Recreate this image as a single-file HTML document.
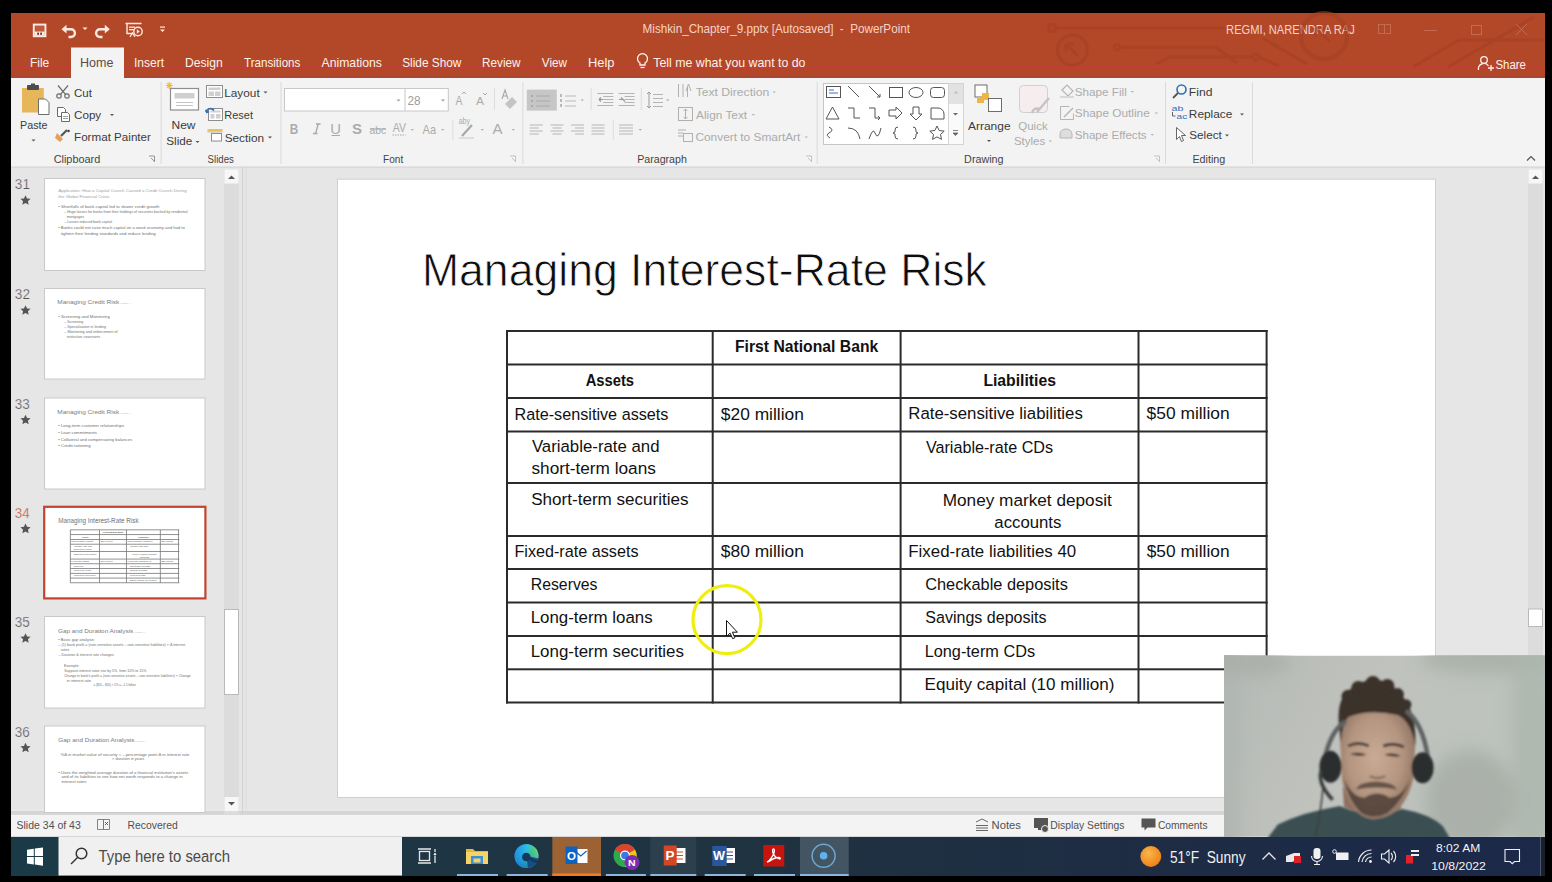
<!DOCTYPE html>
<html><head><meta charset="utf-8"><title>PowerPoint</title>
<style>
html,body{margin:0;padding:0;width:1552px;height:882px;overflow:hidden;background:#000;}
svg{position:absolute;left:0;top:0;display:block;}
#wrap{position:absolute;left:0;top:0;width:1552px;height:882px;}
text{font-family:"Liberation Sans",sans-serif;white-space:pre;}
</style></head><body>
<div id="wrap">
<svg width="1552" height="882" viewBox="0 0 1552 882">
<defs>
<linearGradient id="tbg" x1="0" x2="1" y1="0" y2="0">
 <stop offset="0" stop-color="#1d3a48"/><stop offset="0.5" stop-color="#1f3240"/><stop offset="0.75" stop-color="#1e2c44"/><stop offset="1" stop-color="#1c2849"/>
</linearGradient>
</defs>
<rect x="0" y="0" width="1552" height="882" fill="#000"/>
<rect x="11" y="13" width="1534" height="65" fill="#b34828"/>
<rect x="11" y="66" width="1534" height="3.6" fill="#bc4130"/><rect x="11" y="64.5" width="1534" height="1.5" fill="#ab4b27"/><rect x="11" y="75.5" width="1534" height="2.5" fill="#a84733"/>
<rect x="71" y="47.5" width="53" height="31" fill="#f3f3f3"/>
<rect x="11" y="78" width="1534" height="89" fill="#f3f3f3"/>
<rect x="11" y="167" width="1534" height="648" fill="#e6e6e6"/>
<rect x="11" y="166.5" width="1534" height="1.2" fill="#d4d4d4"/>
<rect x="11" y="809.3" width="1534" height="1" fill="#ececec"/><rect x="11" y="811" width="1534" height="3.8" fill="#d5d5d5"/>
<rect x="11" y="815" width="1534" height="21.5" fill="#f3f3f3"/>
<rect x="11" y="837" width="1534" height="39" fill="url(#tbg)"/><rect x="11" y="836" width="1534" height="1" fill="#d6d6d6"/>
<rect x="337.5" y="179.2" width="1098" height="618.3" fill="#fff" stroke="#d0d0d0" stroke-width="1"/>
<text x="421.93" y="286.20" font-size="46.43" textLength="564.96" lengthAdjust="spacingAndGlyphs" fill="#0d0d0d" stroke="#fff" stroke-width="0.8">Managing Interest-Rate Risk</text>
<rect x="506.0" y="330.0" width="761.6" height="2" fill="#2b2b2b"/>
<rect x="506.0" y="363.5" width="761.6" height="2" fill="#2b2b2b"/>
<rect x="506.0" y="397.0" width="761.6" height="2" fill="#2b2b2b"/>
<rect x="506.0" y="430.5" width="761.6" height="2" fill="#2b2b2b"/>
<rect x="506.0" y="482.0" width="761.6" height="2" fill="#2b2b2b"/>
<rect x="506.0" y="535.0" width="761.6" height="2" fill="#2b2b2b"/>
<rect x="506.0" y="568.0" width="761.6" height="2" fill="#2b2b2b"/>
<rect x="506.0" y="601.5" width="761.6" height="2" fill="#2b2b2b"/>
<rect x="506.0" y="635.0" width="761.6" height="2" fill="#2b2b2b"/>
<rect x="506.0" y="668.3" width="761.6" height="2" fill="#2b2b2b"/>
<rect x="506.0" y="701.5" width="761.6" height="2" fill="#2b2b2b"/>
<rect x="506.0" y="330.0" width="2" height="373.5" fill="#2b2b2b"/>
<rect x="711.7" y="330.0" width="2" height="373.5" fill="#2b2b2b"/>
<rect x="899.6" y="330.0" width="2" height="373.5" fill="#2b2b2b"/>
<rect x="1137.5" y="330.0" width="2" height="373.5" fill="#2b2b2b"/>
<rect x="1265.6" y="330.0" width="2" height="373.5" fill="#2b2b2b"/>
<text x="734.98" y="352.30" font-size="16.86" textLength="143.27" lengthAdjust="spacingAndGlyphs" fill="#111" font-weight="bold">First National Bank</text>
<text x="585.63" y="386.10" font-size="16.86" textLength="48.46" lengthAdjust="spacingAndGlyphs" fill="#111" font-weight="bold">Assets</text>
<text x="983.38" y="385.90" font-size="16.86" textLength="72.59" lengthAdjust="spacingAndGlyphs" fill="#111" font-weight="bold">Liabilities</text>
<text x="514.50" y="419.50" font-size="16.86" textLength="153.95" lengthAdjust="spacingAndGlyphs" fill="#111">Rate-sensitive assets</text>
<text x="720.83" y="419.50" font-size="16.86" textLength="83.01" lengthAdjust="spacingAndGlyphs" fill="#111">$20 million</text>
<text x="908.26" y="419.30" font-size="16.86" textLength="174.60" lengthAdjust="spacingAndGlyphs" fill="#111">Rate-sensitive liabilities</text>
<text x="1146.63" y="419.30" font-size="16.86" textLength="83.01" lengthAdjust="spacingAndGlyphs" fill="#111">$50 million</text>
<text x="531.92" y="452.20" font-size="16.86" textLength="127.62" lengthAdjust="spacingAndGlyphs" fill="#111">Variable-rate and</text>
<text x="531.48" y="474.40" font-size="16.86" textLength="124.42" lengthAdjust="spacingAndGlyphs" fill="#111">short-term loans</text>
<text x="925.92" y="452.90" font-size="16.86" textLength="127.22" lengthAdjust="spacingAndGlyphs" fill="#111">Variable-rate CDs</text>
<text x="531.23" y="505.30" font-size="16.86" textLength="157.36" lengthAdjust="spacingAndGlyphs" fill="#111">Short-term securities</text>
<text x="942.72" y="505.50" font-size="16.86" textLength="169.11" lengthAdjust="spacingAndGlyphs" fill="#111">Money market deposit</text>
<text x="994.33" y="527.80" font-size="16.86" textLength="67.01" lengthAdjust="spacingAndGlyphs" fill="#111">accounts</text>
<text x="514.40" y="556.80" font-size="16.86" textLength="124.16" lengthAdjust="spacingAndGlyphs" fill="#111">Fixed-rate assets</text>
<text x="720.83" y="556.80" font-size="16.86" textLength="83.01" lengthAdjust="spacingAndGlyphs" fill="#111">$80 million</text>
<text x="908.25" y="557.20" font-size="16.86" textLength="167.93" lengthAdjust="spacingAndGlyphs" fill="#111">Fixed-rate liabilities 40</text>
<text x="1146.73" y="557.20" font-size="16.86" textLength="82.81" lengthAdjust="spacingAndGlyphs" fill="#111">$50 million</text>
<text x="530.73" y="590.00" font-size="16.86" textLength="66.80" lengthAdjust="spacingAndGlyphs" fill="#111">Reserves</text>
<text x="925.18" y="590.30" font-size="16.86" textLength="142.65" lengthAdjust="spacingAndGlyphs" fill="#111">Checkable deposits</text>
<text x="530.65" y="623.00" font-size="16.86" textLength="121.96" lengthAdjust="spacingAndGlyphs" fill="#111">Long-term loans</text>
<text x="925.28" y="623.10" font-size="16.86" textLength="121.29" lengthAdjust="spacingAndGlyphs" fill="#111">Savings deposits</text>
<text x="530.65" y="656.50" font-size="16.86" textLength="153.34" lengthAdjust="spacingAndGlyphs" fill="#111">Long-term securities</text>
<text x="924.70" y="656.60" font-size="16.86" textLength="110.37" lengthAdjust="spacingAndGlyphs" fill="#111">Long-term CDs</text>
<text x="924.63" y="690.20" font-size="16.86" textLength="189.81" lengthAdjust="spacingAndGlyphs" fill="#111">Equity capital (10 million)</text>
<circle cx="727" cy="619.7" r="34" fill="none" stroke="#eeee10" stroke-width="3.2"/>
<path d="M726.5 620.5 v16 l3.6 -3.4 2.6 5.6 2.2 -1 -2.5 -5.5 h5z" fill="#fff" stroke="#111" stroke-width="1"/>
<rect x="33.8" y="24.6" width="11.6" height="11.6" fill="none" stroke="#fde9e2" stroke-width="2"/>
<rect x="35.5" y="26" width="8.2" height="5" fill="#c25a40"/><rect x="34.8" y="31.5" width="9.8" height="4" fill="#fde9e2"/><rect x="37.2" y="32.6" width="1.8" height="2.2" fill="#6e3222"/><rect x="40.2" y="32.6" width="1.8" height="2.2" fill="#6e3222"/>
<path d="M65.5 29.2 H71 A3.9 3.9 0 0 1 71 37 H68.5" fill="none" stroke="#fde9e2" stroke-width="2.4"/><path d="M61.5 29.2 L66.5 24.8 V33.6z" fill="#fde9e2"/>
<path d="M82.5 27.5 h5 l-2.5 2.5z" fill="#fde9e2"/>
<path d="M105.5 29.2 H100 A3.9 3.9 0 0 0 100 37 H102.5" fill="none" stroke="#fde9e2" stroke-width="2.4"/><path d="M109.8 29.2 L104.8 24.8 V33.6z" fill="#fde9e2"/>
<g fill="none" stroke="#fde9e2" stroke-width="1.4"><path d="M125.5 23.5 h16 M127 23.5 v10 h6"/><circle cx="138" cy="31.5" r="4.2"/></g><path d="M136.8 29.3 l3 2.2 -3 2.2z" fill="#fde9e2"/><path d="M130 37 l2.5 -4 2.5 4" fill="none" stroke="#fde9e2" stroke-width="1.2"/><rect x="129" y="26.5" width="6" height="1.3" fill="#fde9e2"/><rect x="129" y="29" width="5" height="1.3" fill="#fde9e2"/>
<rect x="160" y="26.5" width="5" height="1.2" fill="#fde9e2"/><path d="M160 29.5 h5 l-2.5 2.5z" fill="#fde9e2"/>
<text x="642.57" y="33.30" font-size="12.43" textLength="267.41" lengthAdjust="spacingAndGlyphs" fill="#f6d3c6">Mishkin_Chapter_9.pptx [Autosaved]  -  PowerPoint</text>
<text x="1226.11" y="34.00" font-size="13.14" textLength="128.75" lengthAdjust="spacingAndGlyphs" fill="#f6d3c6">REGMI, NARENDRA RAJ</text>
<g fill="none" stroke="#a53f24" stroke-width="3" opacity="0.6"><path d="M1055 28 H1225"/><rect x="1049" y="25" width="6" height="6"/><circle cx="1072.5" cy="50" r="15"/><path d="M1066 44 l12 12 M1066 44 h8 M1066 44 v8"/><path d="M1120 47.3 H1216 L1237 63"/><circle cx="1117" cy="47.3" r="3"/><path d="M1156 64 L1170 57 H1253 M1259 57 L1279 66"/><circle cx="1256" cy="57" r="3"/><path d="M1263 38.5 L1307 64"/><circle cx="1324" cy="36" r="23" stroke-width="4"/><path d="M1316 28 l14 14 M1316 28 h9 M1316 28 v9"/><path d="M1413 67 L1459 40 H1545 M1448 67 L1534 17"/></g>
<g fill="none" stroke="#c46a52" stroke-width="1"><rect x="1378.5" y="24.5" width="12" height="9"/><path d="M1384.5 24.5 v9"/><path d="M1424 30.5 h13"/><rect x="1471.5" y="25.5" width="10" height="9"/><path d="M1516 24 l11 11 M1527 24 l-11 11"/></g>
<text x="29.94" y="66.60" font-size="12.29" textLength="19.32" lengthAdjust="spacingAndGlyphs" fill="#fdf1ec">File</text>
<text x="133.91" y="66.60" font-size="12.29" textLength="30.16" lengthAdjust="spacingAndGlyphs" fill="#fdf1ec">Insert</text>
<text x="185.03" y="66.60" font-size="12.29" textLength="37.80" lengthAdjust="spacingAndGlyphs" fill="#fdf1ec">Design</text>
<text x="243.97" y="66.60" font-size="12.29" textLength="56.42" lengthAdjust="spacingAndGlyphs" fill="#fdf1ec">Transitions</text>
<text x="321.50" y="66.60" font-size="12.29" textLength="60.45" lengthAdjust="spacingAndGlyphs" fill="#fdf1ec">Animations</text>
<text x="402.17" y="66.60" font-size="12.29" textLength="59.21" lengthAdjust="spacingAndGlyphs" fill="#fdf1ec">Slide Show</text>
<text x="482.06" y="66.60" font-size="12.29" textLength="38.42" lengthAdjust="spacingAndGlyphs" fill="#fdf1ec">Review</text>
<text x="541.84" y="66.60" font-size="12.29" textLength="25.15" lengthAdjust="spacingAndGlyphs" fill="#fdf1ec">View</text>
<text x="587.97" y="66.60" font-size="12.29" textLength="26.57" lengthAdjust="spacingAndGlyphs" fill="#fdf1ec">Help</text>
<text x="80.00" y="66.60" font-size="12.29" textLength="33.40" lengthAdjust="spacingAndGlyphs" fill="#5e4a44">Home</text>
<g fill="none" stroke="#fdf1ec" stroke-width="1.3"><path d="M640 65 v-2 a5 5 0 1 1 5 0 v2 z"/><path d="M640.5 67.5 h4"/></g>
<text x="653.25" y="66.80" font-size="12.57" textLength="152.24" lengthAdjust="spacingAndGlyphs" fill="#fdf1ec">Tell me what you want to do</text>
<g fill="none" stroke="#fdf1ec" stroke-width="1.3"><circle cx="1484" cy="60" r="3.3"/><path d="M1478.5 70 a5.5 5.5 0 0 1 10 -4"/><path d="M1488 68 h6 M1491 65 v6"/></g>
<text x="1495.49" y="69.00" font-size="12.86" textLength="30.47" lengthAdjust="spacingAndGlyphs" fill="#fdf1ec">Share</text>
<rect x="160.6" y="82" width="1" height="82" fill="#dadada"/>
<rect x="280.5" y="82" width="1" height="82" fill="#dadada"/>
<rect x="522.4" y="82" width="1" height="82" fill="#dadada"/>
<rect x="816.7" y="82" width="1" height="82" fill="#dadada"/>
<rect x="1165.0" y="82" width="1" height="82" fill="#dadada"/>
<rect x="1252.0" y="82" width="1" height="82" fill="#dadada"/>
<rect x="22" y="88" width="21.8" height="24.5" fill="#e8b65a"/><rect x="27" y="85" width="12" height="5" rx="1" fill="#4d4d4d"/><rect x="31" y="83.5" width="4" height="3" fill="#4d4d4d"/>
<path d="M38.5 99 h7 l3.5 3.5 v12 h-10.5z" fill="#fff" stroke="#6d6d6d" stroke-width="1"/>
<text x="20.04" y="129.00" font-size="11.00" textLength="27.47" lengthAdjust="spacingAndGlyphs" fill="#3b3b3b">Paste</text>
<path d="M31.5 139.5 h4 l-2 2z" fill="#555"/>
<g fill="none" stroke="#6b6b6b" stroke-width="1.2"><circle cx="59" cy="96" r="2.2"/><circle cx="67" cy="96" r="2.2"/><path d="M60.5 94.3 L68 85.5 M65.5 94.3 L58 85.5"/></g>
<text x="74.03" y="96.80" font-size="11.71" textLength="17.84" lengthAdjust="spacingAndGlyphs" fill="#3b3b3b">Cut</text>
<g fill="#fff" stroke="#6b6b6b" stroke-width="1"><path d="M57.5 107.5 h6 l2 2 v7 h-8z"/><path d="M61.5 112.5 h6 l2 2 v7 h-8z"/></g><g stroke="#8a8a8a" stroke-width="0.8"><path d="M63 116.5 h5 M63 118.5 h5"/></g>
<text x="74.02" y="118.70" font-size="11.71" textLength="27.18" lengthAdjust="spacingAndGlyphs" fill="#3b3b3b">Copy</text>
<path d="M110 114 h4 l-2 2z" fill="#555"/>
<path d="M57 133 l6 6 -3 3 -5 -4z" fill="#e4a05a"/><path d="M61 136 l6 -6" stroke="#555" stroke-width="2.2"/><circle cx="68.5" cy="131" r="1.3" fill="#444"/>
<text x="74.07" y="141.00" font-size="11.14" textLength="76.84" lengthAdjust="spacingAndGlyphs" fill="#3b3b3b">Format Painter</text>
<text x="53.65" y="162.70" font-size="10.00" textLength="46.66" lengthAdjust="spacingAndGlyphs" fill="#444">Clipboard</text>
<path d="M149 156 h5.5 v5.5 M151 158 l4 4" fill="none" stroke="#8a8a8a" stroke-width="0.9"/>
<rect x="170.5" y="88.5" width="28" height="21.5" fill="#fff" stroke="#8d8d8d" stroke-width="1.2"/><rect x="174.5" y="93" width="20" height="5.5" fill="#cfcfcf"/><path d="M176 102.5 h17 M176 105.5 h17" stroke="#c5c5c5" stroke-width="1"/>
<g stroke="#f2b84b" stroke-width="1.2"><path d="M169.3 82 v7 M165.8 85.5 h7 M167 83.2 l4.6 4.6 M171.6 83.2 l-4.6 4.6"/></g>
<text x="171.54" y="129.10" font-size="11.14" textLength="23.90" lengthAdjust="spacingAndGlyphs" fill="#3b3b3b">New</text>
<text x="166.27" y="144.80" font-size="11.71" textLength="26.04" lengthAdjust="spacingAndGlyphs" fill="#3b3b3b">Slide</text>
<path d="M195.5 141 h4 l-2 2z" fill="#555"/>
<rect x="206.5" y="85.5" width="16" height="12" fill="#fff" stroke="#8d8d8d" stroke-width="1"/><rect x="208.5" y="87.5" width="12" height="2.5" fill="#cfcfcf"/><rect x="208.5" y="91.5" width="5.5" height="4.5" fill="#cfcfcf"/><rect x="215" y="91.5" width="5.5" height="4.5" fill="#cfcfcf"/>
<text x="224.26" y="96.80" font-size="11.71" textLength="35.43" lengthAdjust="spacingAndGlyphs" fill="#3b3b3b">Layout</text>
<path d="M263.5 91.5 h4 l-2 2z" fill="#555"/>
<rect x="208.5" y="108.5" width="14" height="12" fill="#fff" stroke="#8d8d8d" stroke-width="1"/><rect x="210.5" y="110.5" width="10" height="2" fill="#d0d0d0"/><rect x="210.5" y="114" width="4" height="4.5" fill="#d0d0d0"/><rect x="216" y="114" width="4.5" height="4.5" fill="#d0d0d0"/><path d="M206 112 a4.5 4.5 0 0 1 8 -1.5" fill="none" stroke="#2f6fb6" stroke-width="1.6"/><path d="M205 109.5 l1.2 4 3.5-1.5z" fill="#2f6fb6"/>
<text x="224.32" y="118.70" font-size="11.71" textLength="28.66" lengthAdjust="spacingAndGlyphs" fill="#3b3b3b">Reset</text>
<rect x="207.5" y="129" width="15" height="2.5" fill="#e8c25a"/><rect x="211.5" y="133.5" width="10" height="7.5" fill="#fff" stroke="#8d8d8d" stroke-width="1"/><path d="M207.5 132 h15" stroke="#bdbdbd"/>
<text x="224.67" y="141.60" font-size="11.71" textLength="39.41" lengthAdjust="spacingAndGlyphs" fill="#3b3b3b">Section</text>
<path d="M268 136.5 h4 l-2 2z" fill="#555"/>
<text x="207.57" y="162.70" font-size="10.00" textLength="26.26" lengthAdjust="spacingAndGlyphs" fill="#444">Slides</text>
<rect x="284.5" y="88.5" width="163.8" height="22.5" fill="#fff" stroke="#c8c8c8" stroke-width="1"/><rect x="404.5" y="88.5" width="1" height="22.5" fill="#c8c8c8"/>
<path d="M396.5 99.5 h4 l-2 2z" fill="#9a9a9a"/><path d="M441 99.5 h4 l-2 2z" fill="#9a9a9a"/>
<text x="407.41" y="104.60" font-size="12.29" textLength="13.09" lengthAdjust="spacingAndGlyphs" fill="#9c9c9c">28</text>
<text x="455.60" y="105.00" font-size="12.86" textLength="6.92" lengthAdjust="spacingAndGlyphs" fill="#ababab">A</text>
<path d="M462 94 l2 -2 2 2" fill="none" stroke="#a8a8a8" stroke-width="1"/>
<text x="476.00" y="105.00" font-size="11.43" textLength="8.02" lengthAdjust="spacingAndGlyphs" fill="#ababab">A</text>
<path d="M483 93 l2 2 2 -2" fill="none" stroke="#a8a8a8" stroke-width="1"/>
<rect x="494" y="88" width="1" height="22" fill="#dcdcdc"/><rect x="452.4" y="120" width="1" height="20" fill="#dcdcdc"/>
<path d="M505 104 l7 -7 5 5 -7 7z" fill="#c4c4c4"/><path d="M502 99 l3 -9 3 9 M503.2 96 h3.6" fill="none" stroke="#a8a8a8" stroke-width="1.1"/>
<text x="289.73" y="133.60" font-size="13.71" textLength="8.52" lengthAdjust="spacingAndGlyphs" fill="#ababab" font-weight="bold">B</text>
<path d="M316 124 h4.5 M313 133.5 h4.5 M318.2 124 l-2.6 9.5" fill="none" stroke="#a8a8a8" stroke-width="1.3"/>
<text x="330.38" y="133.60" font-size="13.71" textLength="10.77" lengthAdjust="spacingAndGlyphs" fill="#ababab">U</text>
<rect x="331.5" y="135" width="8.5" height="1" fill="#a8a8a8"/>
<text x="352.05" y="133.60" font-size="13.71" textLength="10.01" lengthAdjust="spacingAndGlyphs" fill="#ababab" font-weight="bold">S</text>
<text x="369.59" y="133.60" font-size="10.71" textLength="16.70" lengthAdjust="spacingAndGlyphs" fill="#ababab">abc</text>
<rect x="370" y="128.5" width="16" height="1" fill="#a8a8a8"/>
<text x="392.80" y="132.00" font-size="12.86" textLength="13.25" lengthAdjust="spacingAndGlyphs" fill="#ababab">AV</text>
<path d="M392.5 135 h13" stroke="#a8a8a8" stroke-dasharray="1.5 1"/><path d="M410.5 129 h3.5 l-1.75 1.75z" fill="#b0b0b0"/>
<text x="422.60" y="133.60" font-size="12.86" textLength="13.44" lengthAdjust="spacingAndGlyphs" fill="#ababab">Aa</text>
<path d="M441 129 h3.5 l-1.75 1.75z" fill="#b0b0b0"/>
<text x="458.72" y="124.00" font-size="8.57" textLength="11.30" lengthAdjust="spacingAndGlyphs" fill="#ababab">aby</text>
<path d="M462 136 l10 -11" stroke="#a8a8a8" stroke-width="2.2"/><rect x="459" y="137" width="15" height="2" fill="#dedede"/><path d="M480.5 129 h3.5 l-1.75 1.75z" fill="#b0b0b0"/>
<text x="492.60" y="133.60" font-size="14.29" textLength="10.03" lengthAdjust="spacingAndGlyphs" fill="#ababab">A</text>
<path d="M511.5 129 h3.5 l-1.75 1.75z" fill="#b0b0b0"/>
<text x="383.09" y="162.60" font-size="10.00" textLength="20.17" lengthAdjust="spacingAndGlyphs" fill="#444">Font</text>
<path d="M510 156 h5.5 v5.5 M512 158 l4 4" fill="none" stroke="#bdbdbd" stroke-width="0.9"/>
<rect x="526.8" y="89.6" width="30" height="21" fill="#c6c6c6"/>
<rect x="531" y="95" width="2" height="2" fill="#a9a9a9"/><rect x="536" y="95.5" width="14" height="1" fill="#a9a9a9"/>
<rect x="560" y="94" width="2" height="3" fill="#b9b9b9"/><rect x="565" y="95.5" width="11" height="1" fill="#b9b9b9"/>
<rect x="531" y="100" width="2" height="2" fill="#a9a9a9"/><rect x="536" y="100.5" width="14" height="1" fill="#a9a9a9"/>
<rect x="560" y="99" width="2" height="3" fill="#b9b9b9"/><rect x="565" y="100.5" width="11" height="1" fill="#b9b9b9"/>
<rect x="531" y="105" width="2" height="2" fill="#a9a9a9"/><rect x="536" y="105.5" width="14" height="1" fill="#a9a9a9"/>
<rect x="560" y="104" width="2" height="3" fill="#b9b9b9"/><rect x="565" y="105.5" width="11" height="1" fill="#b9b9b9"/>
<path d="M580.5 99.5 h3.5 l-1.75 1.75z" fill="#b0b0b0"/><rect x="590.6" y="88" width="1" height="22" fill="#dcdcdc"/><rect x="640.8" y="88" width="1" height="22" fill="#dcdcdc"/>
<rect x="597.3" y="93" width="16" height="1" fill="#b5b5b5"/>
<rect x="603.3" y="96" width="10" height="1" fill="#b5b5b5"/>
<rect x="603.3" y="99" width="10" height="1" fill="#b5b5b5"/>
<rect x="603.3" y="102" width="10" height="1" fill="#b5b5b5"/>
<rect x="597.3" y="105" width="16" height="1" fill="#b5b5b5"/>
<rect x="618.6" y="93" width="16" height="1" fill="#b5b5b5"/>
<rect x="624.6" y="96" width="10" height="1" fill="#b5b5b5"/>
<rect x="624.6" y="99" width="10" height="1" fill="#b5b5b5"/>
<rect x="624.6" y="102" width="10" height="1" fill="#b5b5b5"/>
<rect x="618.6" y="105" width="16" height="1" fill="#b5b5b5"/>
<path d="M603 99.5 l-4 0 M599 99.5 l2 -2 M599 99.5 l2 2" stroke="#9a9a9a" stroke-width="1.2" fill="none"/><path d="M619 99.5 h4 M623 99.5 l-2 -2 M623 99.5 l2 2" stroke="#9a9a9a" stroke-width="1.2" fill="none" transform="translate(0 0)"/>
<g fill="#b5b5b5"><rect x="653" y="94" width="10" height="1"/><rect x="653" y="98" width="10" height="1"/><rect x="653" y="102" width="10" height="1"/><rect x="653" y="106" width="10" height="1"/></g><path d="M649 92 v16 M647 94 l2 -2 2 2 M647 106 l2 2 2 -2" stroke="#9a9a9a" fill="none"/><path d="M666 99.5 h3.5 l-1.75 1.75z" fill="#b0b0b0"/>
<rect x="529.7" y="124.5" width="13" height="1" fill="#b5b5b5"/>
<rect x="529.7" y="127.5" width="9" height="1" fill="#b5b5b5"/>
<rect x="529.7" y="130.5" width="13" height="1" fill="#b5b5b5"/>
<rect x="529.7" y="133.5" width="9" height="1" fill="#b5b5b5"/>
<rect x="550.5" y="124.5" width="13" height="1" fill="#b5b5b5"/>
<rect x="552.5" y="127.5" width="9" height="1" fill="#b5b5b5"/>
<rect x="550.5" y="130.5" width="13" height="1" fill="#b5b5b5"/>
<rect x="552.5" y="133.5" width="9" height="1" fill="#b5b5b5"/>
<rect x="571.0" y="124.5" width="13" height="1" fill="#b5b5b5"/>
<rect x="575.0" y="127.5" width="9" height="1" fill="#b5b5b5"/>
<rect x="571.0" y="130.5" width="13" height="1" fill="#b5b5b5"/>
<rect x="575.0" y="133.5" width="9" height="1" fill="#b5b5b5"/>
<rect x="591.5" y="124.5" width="13" height="1" fill="#b5b5b5"/>
<rect x="591.5" y="127.5" width="13" height="1" fill="#b5b5b5"/>
<rect x="591.5" y="130.5" width="13" height="1" fill="#b5b5b5"/>
<rect x="591.5" y="133.5" width="13" height="1" fill="#b5b5b5"/>
<rect x="612.8" y="120" width="1" height="20" fill="#dcdcdc"/>
<rect x="619" y="124.5" width="14" height="1" fill="#b5b5b5"/>
<rect x="619" y="127.5" width="14" height="1" fill="#b5b5b5"/>
<rect x="619" y="130.5" width="14" height="1" fill="#b5b5b5"/>
<rect x="619" y="133.5" width="14" height="1" fill="#b5b5b5"/>
<path d="M638.5 129 h3.5 l-1.75 1.75z" fill="#b0b0b0"/>
<g stroke="#b0b0b0" stroke-width="1" fill="none"><path d="M678.5 84 v13 M683 84 v13 M687.5 87 v10"/><path d="M686 91 l2.5 -7 2.5 7"/></g>
<text x="695.76" y="96.40" font-size="11.71" textLength="73.46" lengthAdjust="spacingAndGlyphs" fill="#ababab">Text Direction</text>
<path d="M772.5 91.5 h3.5 l-1.75 1.75z" fill="#b8b8b8"/>
<rect x="678.5" y="107.5" width="14" height="13" fill="none" stroke="#b0b0b0"/><path d="M685.5 109 v10 M683.5 111 l2 -2 2 2 M683.5 117 l2 2 2 -2" stroke="#b0b0b0" fill="none"/>
<text x="696.00" y="119.00" font-size="11.71" textLength="51.09" lengthAdjust="spacingAndGlyphs" fill="#ababab">Align Text</text>
<path d="M751.5 114 h3.5 l-1.75 1.75z" fill="#b8b8b8"/>
<rect x="683.5" y="133.5" width="9" height="8" fill="none" stroke="#b0b0b0"/><path d="M678 130 h8 M678 133 h5 M678 136 h5" stroke="#b0b0b0"/>
<text x="695.41" y="141.40" font-size="11.71" textLength="104.97" lengthAdjust="spacingAndGlyphs" fill="#ababab">Convert to SmartArt</text>
<path d="M804.5 136.5 h3.5 l-1.75 1.75z" fill="#b8b8b8"/>
<text x="637.15" y="163.00" font-size="10.00" textLength="49.75" lengthAdjust="spacingAndGlyphs" fill="#444">Paragraph</text>
<path d="M806 156 h5.5 v5.5 M808 158 l4 4" fill="none" stroke="#bdbdbd" stroke-width="0.9"/>
<rect x="823.5" y="83.5" width="140" height="61" fill="#fff" stroke="#c6c6c6"/><rect x="948.5" y="83.5" width="15" height="61" fill="#fafafa" stroke="#d4d4d4"/><rect x="949" y="84" width="14" height="20" fill="#e2e2e2"/>
<path d="M953.5 93.5 h5 l-2.5 -2.5z" fill="#c0c0c0"/><path d="M953 113 h5 l-2.5 2.5z" fill="#666"/><path d="M953 130.5 h5 M953 133 h5 l-2.5 2.5z" stroke="#666" fill="#666" stroke-width="0.8"/>
<g fill="none" stroke="#555" stroke-width="1">
<rect x="826.5" y="86.5" width="14" height="11"/><path d="M829 90 h5 M829 93 h9" stroke="#3a6fbf"/>
<path d="M848 86 L859 97"/><path d="M869 86 L880 97"/><path d="M877 97 h3 v-3"/>
<rect x="889.5" y="87.5" width="13" height="10"/>
<ellipse cx="916" cy="92.5" rx="7" ry="5"/>
<rect x="930.5" y="87.5" width="14" height="10" rx="3"/>
<path d="M826 119 L832.5 107 L839 119z"/>
<path d="M848 108 h6 v10 h6"/><path d="M869 108 h6 v10 h5 l-2 -2 M880 118 l-2 2"/>
<path d="M889 110 h7 v-3 l6 6 -6 6 v-3 h-7z"/>
<path d="M913 107 h6 v7 h3 l-6 6 -6 -6 h3z"/>
<path d="M931 108 h7 a6 6 0 0 1 6 6 v5 h-13z"/>
<path d="M829 127 q6 3 0 6 q-4 2 1 5"/>
<path d="M848 128 q10 0 12 11"/>
<path d="M869 139 q4 -12 6 -6 q3 8 6 -5"/>
<path d="M898 127 q-3 0 -3 3 v2 l-2 1 2 1 v2 q0 3 3 3"/>
<path d="M913 127 q3 0 3 3 v2 l2 1 -2 1 v2 q0 3 -3 3"/>
<path d="M937 126 l2.2 4.5 5 .6 -3.7 3.3 1 5 -4.5-2.5 -4.5 2.5 1-5 -3.7-3.3 5-.6z"/>
</g>
<rect x="975" y="85" width="12" height="12" fill="#fff" stroke="#6d6d6d"/><rect x="982" y="93" width="7" height="7" fill="#f0b442"/><rect x="977" y="97" width="7" height="6" fill="#f0b442"/><rect x="988.5" y="98.5" width="13" height="13" fill="#fff" stroke="#6d6d6d"/>
<text x="968.00" y="130.00" font-size="11.71" textLength="42.57" lengthAdjust="spacingAndGlyphs" fill="#3b3b3b">Arrange</text>
<path d="M987 140 h4 l-2 2z" fill="#555"/>
<rect x="1019.5" y="85.5" width="28" height="27" rx="4" fill="#f6eeee" stroke="#d0d0d0"/><path d="M1037 112 l12 -14 M1032 113 q2 -6 7 -4" stroke="#c4c4c4" stroke-width="2.5" fill="none"/>
<text x="1018.28" y="130.00" font-size="11.71" textLength="29.43" lengthAdjust="spacingAndGlyphs" fill="#ababab">Quick</text>
<text x="1013.88" y="144.60" font-size="11.71" textLength="31.30" lengthAdjust="spacingAndGlyphs" fill="#ababab">Styles</text>
<path d="M1048.5 140.5 h3.5 l-1.75 1.75z" fill="#b8b8b8"/>
<path d="M1062 90 l5 -5 6 6 -5 5z" fill="none" stroke="#b5b5b5" stroke-width="1.2"/><rect x="1060" y="96" width="14" height="2" fill="#d8d8d8"/>
<text x="1074.77" y="95.90" font-size="11.71" textLength="52.01" lengthAdjust="spacingAndGlyphs" fill="#ababab">Shape Fill</text>
<path d="M1130.5 91 h3.5 l-1.75 1.75z" fill="#b8b8b8"/>
<path d="M1060.5 106.5 h9 M1060.5 106.5 v13 h13 v-6" fill="none" stroke="#b5b5b5"/><path d="M1064 117 l9 -9" stroke="#b5b5b5" stroke-width="1.5"/>
<text x="1074.77" y="117.00" font-size="11.71" textLength="75.00" lengthAdjust="spacingAndGlyphs" fill="#ababab">Shape Outline</text>
<path d="M1154.5 112.5 h3.5 l-1.75 1.75z" fill="#b8b8b8"/>
<path d="M1060 134 a6 5 0 0 1 12 0 v4 h-12z" fill="#dedede" stroke="#b5b5b5"/>
<text x="1074.78" y="138.80" font-size="11.71" textLength="71.90" lengthAdjust="spacingAndGlyphs" fill="#ababab">Shape Effects</text>
<path d="M1150.5 134 h3.5 l-1.75 1.75z" fill="#b8b8b8"/>
<text x="964.14" y="163.40" font-size="10.00" textLength="39.39" lengthAdjust="spacingAndGlyphs" fill="#444">Drawing</text>
<path d="M1154 156 h5.5 v5.5 M1156 158 l4 4" fill="none" stroke="#bdbdbd" stroke-width="0.9"/>
<circle cx="1181.5" cy="89.5" r="4.5" fill="none" stroke="#2f6fb6" stroke-width="1.6"/><path d="M1178 93 l-5 5" stroke="#555" stroke-width="1.8"/>
<text x="1188.83" y="95.90" font-size="11.71" textLength="23.56" lengthAdjust="spacingAndGlyphs" fill="#3b3b3b">Find</text>
<text x="1171.57" y="111.00" font-size="7.86" textLength="11.88" lengthAdjust="spacingAndGlyphs" fill="#2f6fb6">ab</text>
<text x="1176.60" y="119.00" font-size="7.86" textLength="10.67" lengthAdjust="spacingAndGlyphs" fill="#2f6fb6">ac</text>
<path d="M1172.5 112 v4 h3" fill="none" stroke="#555" stroke-width="0.9"/>
<text x="1188.85" y="117.90" font-size="11.71" textLength="43.57" lengthAdjust="spacingAndGlyphs" fill="#3b3b3b">Replace</text>
<path d="M1240 113.5 h4 l-2 2z" fill="#555"/>
<path d="M1176.5 127.5 v12 l3 -3 2 5 2 -1 -2 -5 h4z" fill="#fff" stroke="#555" stroke-width="0.9"/>
<text x="1189.27" y="139.40" font-size="11.71" textLength="32.54" lengthAdjust="spacingAndGlyphs" fill="#3b3b3b">Select</text>
<path d="M1225 134.5 h4 l-2 2z" fill="#555"/>
<text x="1192.44" y="163.40" font-size="10.00" textLength="32.89" lengthAdjust="spacingAndGlyphs" fill="#444">Editing</text>
<path d="M1527 160.5 l4 -4 4 4" fill="none" stroke="#555" stroke-width="1.2"/>
<rect x="224" y="169.5" width="15" height="645" fill="#dcdcdc"/>
<rect x="242" y="167" width="1" height="648" fill="#d2d2d2"/><rect x="245.5" y="167" width="1" height="648" fill="#dadada"/>
<rect x="224.5" y="169.5" width="14" height="14" fill="#f7f7f7"/><path d="M228 179 h7 l-3.5 -3.5z" fill="#555"/>
<rect x="224.5" y="797" width="14" height="14" fill="#f7f7f7"/><path d="M228 802 h7 l-3.5 3.5z" fill="#555"/>
<rect x="224.5" y="609.5" width="14" height="85" fill="#fff" stroke="#b9b9b9" stroke-width="1"/>
<rect x="44.5" y="178.5" width="160.5" height="92" fill="#fff" stroke="#c9c9c9" stroke-width="1"/>
<text x="14.86" y="189.40" font-size="14.29" textLength="15.08" lengthAdjust="spacingAndGlyphs" fill="#585858" stroke="#e6e6e6" stroke-width="0.25">31</text>
<path d="M25.5 195.2 l1.55 3.2 3.5 .45 -2.6 2.4 .7 3.5 -3.15-1.75 -3.15 1.75 .7-3.5 -2.6-2.4 3.5-.45z" fill="#555"/>
<rect x="44.5" y="288.5" width="160.5" height="90.5" fill="#fff" stroke="#c9c9c9" stroke-width="1"/>
<text x="14.85" y="299.40" font-size="14.29" textLength="15.16" lengthAdjust="spacingAndGlyphs" fill="#585858" stroke="#e6e6e6" stroke-width="0.25">32</text>
<path d="M25.5 305.2 l1.55 3.2 3.5 .45 -2.6 2.4 .7 3.5 -3.15-1.75 -3.15 1.75 .7-3.5 -2.6-2.4 3.5-.45z" fill="#555"/>
<rect x="44.5" y="398.0" width="160.5" height="91.0" fill="#fff" stroke="#c9c9c9" stroke-width="1"/>
<text x="14.86" y="408.90" font-size="14.29" textLength="15.01" lengthAdjust="spacingAndGlyphs" fill="#585858" stroke="#e6e6e6" stroke-width="0.25">33</text>
<path d="M25.5 414.7 l1.55 3.2 3.5 .45 -2.6 2.4 .7 3.5 -3.15-1.75 -3.15 1.75 .7-3.5 -2.6-2.4 3.5-.45z" fill="#555"/>
<rect x="44.5" y="616.5" width="160.5" height="91.5" fill="#fff" stroke="#c9c9c9" stroke-width="1"/>
<text x="14.86" y="627.40" font-size="14.29" textLength="15.01" lengthAdjust="spacingAndGlyphs" fill="#585858" stroke="#e6e6e6" stroke-width="0.25">35</text>
<path d="M25.5 633.2 l1.55 3.2 3.5 .45 -2.6 2.4 .7 3.5 -3.15-1.75 -3.15 1.75 .7-3.5 -2.6-2.4 3.5-.45z" fill="#555"/>
<rect x="44.5" y="726.0" width="160.5" height="86.5" fill="#fff" stroke="#c9c9c9" stroke-width="1"/>
<text x="14.86" y="736.90" font-size="14.29" textLength="15.01" lengthAdjust="spacingAndGlyphs" fill="#585858" stroke="#e6e6e6" stroke-width="0.25">36</text>
<path d="M25.5 742.7 l1.55 3.2 3.5 .45 -2.6 2.4 .7 3.5 -3.15-1.75 -3.15 1.75 .7-3.5 -2.6-2.4 3.5-.45z" fill="#555"/>
<rect x="44.2" y="506.8" width="161.2" height="91.6" fill="#fff" stroke="#c4432e" stroke-width="2.2"/>
<text x="14.87" y="517.90" font-size="14.71" textLength="14.87" lengthAdjust="spacingAndGlyphs" fill="#c5553a" stroke="#e6e6e6" stroke-width="0.25">34</text>
<path d="M25.5 523.6 l1.55 3.2 3.5 .45 -2.6 2.4 .7 3.5 -3.15-1.75 -3.15 1.75 .7-3.5 -2.6-2.4 3.5-.45z" fill="#555"/>
<text x="58.40" y="192.40" font-size="3.71" textLength="128.18" lengthAdjust="spacingAndGlyphs" fill="#888" opacity="0.8">Application: How a Capital Crunch Caused a Credit Crunch During</text>
<text x="58.33" y="197.70" font-size="3.71" textLength="50.82" lengthAdjust="spacingAndGlyphs" fill="#888" opacity="0.8">the Global Financial Crisis</text>
<text x="58.23" y="208.40" font-size="3.71" textLength="101.16" lengthAdjust="spacingAndGlyphs" fill="#4a4a4a" opacity="0.8">• Shortfalls of bank capital led to slower credit growth</text>
<text x="64.30" y="213.20" font-size="3.71" textLength="123.34" lengthAdjust="spacingAndGlyphs" fill="#4a4a4a" opacity="0.8">– Huge losses for banks from their holdings of securities backed by residential</text>
<text x="66.76" y="217.70" font-size="3.71" textLength="17.37" lengthAdjust="spacingAndGlyphs" fill="#4a4a4a" opacity="0.8">mortgages</text>
<text x="64.30" y="222.60" font-size="3.71" textLength="47.64" lengthAdjust="spacingAndGlyphs" fill="#4a4a4a" opacity="0.8">– Losses reduced bank capital</text>
<text x="58.23" y="229.00" font-size="3.71" textLength="126.64" lengthAdjust="spacingAndGlyphs" fill="#4a4a4a" opacity="0.8">• Banks could not raise much capital on a weak economy and had to</text>
<text x="60.94" y="234.50" font-size="3.71" textLength="94.76" lengthAdjust="spacingAndGlyphs" fill="#4a4a4a" opacity="0.8">tighten their lending standards and reduce lending</text>
<text x="57.38" y="304.00" font-size="5.14" textLength="61.82" lengthAdjust="spacingAndGlyphs" fill="#666" opacity="0.85">Managing Credit Risk</text>
<text x="120.28" y="304.00" font-size="2.29" textLength="10.35" lengthAdjust="spacingAndGlyphs" fill="#aaa" opacity="0.8">(cont.)</text>
<text x="58.23" y="317.90" font-size="3.71" textLength="51.65" lengthAdjust="spacingAndGlyphs" fill="#4a4a4a" opacity="0.8">• Screening and Monitoring</text>
<text x="64.30" y="322.60" font-size="3.71" textLength="18.84" lengthAdjust="spacingAndGlyphs" fill="#4a4a4a" opacity="0.8">– Screening</text>
<text x="64.30" y="328.00" font-size="3.71" textLength="41.73" lengthAdjust="spacingAndGlyphs" fill="#4a4a4a" opacity="0.8">– Specialization in lending</text>
<text x="64.30" y="332.80" font-size="3.71" textLength="53.29" lengthAdjust="spacingAndGlyphs" fill="#4a4a4a" opacity="0.8">– Monitoring and enforcement of</text>
<text x="66.76" y="337.60" font-size="3.71" textLength="33.37" lengthAdjust="spacingAndGlyphs" fill="#4a4a4a" opacity="0.8">restrictive covenants</text>
<text x="57.38" y="413.60" font-size="5.14" textLength="61.82" lengthAdjust="spacingAndGlyphs" fill="#666" opacity="0.85">Managing Credit Risk</text>
<text x="120.28" y="413.60" font-size="2.29" textLength="10.35" lengthAdjust="spacingAndGlyphs" fill="#aaa" opacity="0.8">(cont.)</text>
<text x="58.23" y="427.10" font-size="3.71" textLength="65.91" lengthAdjust="spacingAndGlyphs" fill="#4a4a4a" opacity="0.8">• Long-term customer relationships</text>
<text x="58.23" y="433.50" font-size="3.71" textLength="38.72" lengthAdjust="spacingAndGlyphs" fill="#4a4a4a" opacity="0.8">• Loan commitments</text>
<text x="58.23" y="440.60" font-size="3.71" textLength="73.91" lengthAdjust="spacingAndGlyphs" fill="#4a4a4a" opacity="0.8">• Collateral and compensating balances</text>
<text x="58.22" y="447.00" font-size="3.71" textLength="32.46" lengthAdjust="spacingAndGlyphs" fill="#4a4a4a" opacity="0.8">• Credit rationing</text>
<text x="58.08" y="632.80" font-size="5.14" textLength="75.14" lengthAdjust="spacingAndGlyphs" fill="#666" opacity="0.85">Gap and Duration Analysis</text>
<text x="134.27" y="632.80" font-size="2.29" textLength="10.67" lengthAdjust="spacingAndGlyphs" fill="#aaa" opacity="0.8">(cont.)</text>
<text x="58.24" y="640.70" font-size="3.71" textLength="36.73" lengthAdjust="spacingAndGlyphs" fill="#4a4a4a" opacity="0.8">• Basic gap analysis:</text>
<text x="58.40" y="646.40" font-size="3.71" textLength="126.94" lengthAdjust="spacingAndGlyphs" fill="#4a4a4a" opacity="0.8">– (1) bank profit = (rate-sensitive assets – rate-sensitive liabilities) × Δ interest</text>
<text x="60.76" y="650.60" font-size="3.71" textLength="8.37" lengthAdjust="spacingAndGlyphs" fill="#4a4a4a" opacity="0.8">rates</text>
<text x="58.40" y="656.30" font-size="3.71" textLength="55.53" lengthAdjust="spacingAndGlyphs" fill="#4a4a4a" opacity="0.8">– Duration &amp; interest rate changes</text>
<text x="64.00" y="666.60" font-size="3.71" textLength="15.55" lengthAdjust="spacingAndGlyphs" fill="#4a4a4a" opacity="0.8">Example:</text>
<text x="64.14" y="672.30" font-size="3.71" textLength="82.28" lengthAdjust="spacingAndGlyphs" fill="#4a4a4a" opacity="0.8">Suppose interest rates rise by 5%, from 10% to 15%</text>
<text x="64.13" y="677.30" font-size="3.71" textLength="126.63" lengthAdjust="spacingAndGlyphs" fill="#4a4a4a" opacity="0.8">Change in bank&#x27;s profit = (rate-sensitive assets – rate-sensitive liabilities) × Change</text>
<text x="66.75" y="681.60" font-size="3.71" textLength="24.33" lengthAdjust="spacingAndGlyphs" fill="#4a4a4a" opacity="0.8">in interest rate</text>
<text x="93.45" y="685.80" font-size="3.71" textLength="42.44" lengthAdjust="spacingAndGlyphs" fill="#4a4a4a" opacity="0.8">= ($20 – $50) × 5% = –1.5 billion</text>
<text x="58.28" y="741.90" font-size="5.14" textLength="76.25" lengthAdjust="spacingAndGlyphs" fill="#666" opacity="0.85">Gap and Duration Analysis</text>
<text x="135.28" y="741.90" font-size="2.29" textLength="10.25" lengthAdjust="spacingAndGlyphs" fill="#aaa" opacity="0.8">(cont.)</text>
<text x="60.55" y="755.50" font-size="3.71" textLength="128.74" lengthAdjust="spacingAndGlyphs" fill="#4a4a4a" opacity="0.8">%Δ in market value of security ≈ – percentage point Δ in interest rate</text>
<text x="112.13" y="760.00" font-size="3.71" textLength="32.21" lengthAdjust="spacingAndGlyphs" fill="#4a4a4a" opacity="0.8">× duration in years</text>
<text x="58.43" y="773.50" font-size="3.71" textLength="129.70" lengthAdjust="spacingAndGlyphs" fill="#4a4a4a" opacity="0.8">• Uses the weighted average duration of a financial institution&#x27;s assets</text>
<text x="61.53" y="778.20" font-size="3.71" textLength="121.06" lengthAdjust="spacingAndGlyphs" fill="#4a4a4a" opacity="0.8">and of its liabilities to see how net worth responds to a change in</text>
<text x="61.42" y="782.90" font-size="3.71" textLength="25.03" lengthAdjust="spacingAndGlyphs" fill="#4a4a4a" opacity="0.8">interest rates</text>
<rect x="1528" y="169.5" width="15" height="645" fill="#dcdcdc"/>
<rect x="1528.5" y="169.5" width="14" height="14" fill="#f7f7f7"/><path d="M1532 179 h7 l-3.5 -3.5z" fill="#555"/>
<rect x="1528.5" y="609" width="14" height="17.5" fill="#fff" stroke="#b9b9b9" stroke-width="1"/>
<text x="16.53" y="829.00" font-size="10.57" textLength="64.30" lengthAdjust="spacingAndGlyphs" fill="#505050">Slide 34 of 43</text>
<path d="M97.5 819.5 h6 v10 h-6z M103.5 819.5 h6 v10 h-6z" fill="none" stroke="#777" stroke-width="0.9"/><path d="M105 822 l3 3 M108 822 l-3 3" stroke="#555" stroke-width="0.9"/>
<text x="127.47" y="829.00" font-size="10.57" textLength="50.22" lengthAdjust="spacingAndGlyphs" fill="#505050">Recovered</text>
<path d="M976 822 l6 -3 6 3 M976 825.5 h12 M976 828 h12 M976 830.5 h12" fill="none" stroke="#666" stroke-width="1"/>
<text x="991.61" y="829.00" font-size="10.57" textLength="29.21" lengthAdjust="spacingAndGlyphs" fill="#505050">Notes</text>
<rect x="1034" y="818" width="14" height="10" fill="#555"/><rect x="1038" y="828" width="6" height="2" fill="#555"/><circle cx="1045" cy="829" r="3.5" fill="#555" stroke="#f3f3f3" stroke-width="1"/>
<text x="1050.17" y="829.00" font-size="10.57" textLength="74.39" lengthAdjust="spacingAndGlyphs" fill="#505050">Display Settings</text>
<path d="M1141.5 818.5 h14 v9 h-8 l-3 3 v-3 h-3z" fill="#555"/>
<text x="1157.89" y="829.00" font-size="10.57" textLength="49.67" lengthAdjust="spacingAndGlyphs" fill="#505050">Comments</text>
<g transform="translate(46.2 508.2) scale(0.1425) translate(-338 -179)" opacity="0.75"><text x="421.93" y="286.20" font-size="46.43" textLength="564.96" lengthAdjust="spacingAndGlyphs" fill="#0d0d0d" stroke="#fff" stroke-width="0.8">Managing Interest-Rate Risk</text><text x="734.98" y="352.30" font-size="16.86" textLength="143.27" lengthAdjust="spacingAndGlyphs" fill="#111" font-weight="bold">First National Bank</text><text x="585.63" y="386.10" font-size="16.86" textLength="48.46" lengthAdjust="spacingAndGlyphs" fill="#111" font-weight="bold">Assets</text><text x="983.38" y="385.90" font-size="16.86" textLength="72.59" lengthAdjust="spacingAndGlyphs" fill="#111" font-weight="bold">Liabilities</text><text x="514.50" y="419.50" font-size="16.86" textLength="153.95" lengthAdjust="spacingAndGlyphs" fill="#111">Rate-sensitive assets</text><text x="720.83" y="419.50" font-size="16.86" textLength="83.01" lengthAdjust="spacingAndGlyphs" fill="#111">$20 million</text><text x="908.26" y="419.30" font-size="16.86" textLength="174.60" lengthAdjust="spacingAndGlyphs" fill="#111">Rate-sensitive liabilities</text><text x="1146.63" y="419.30" font-size="16.86" textLength="83.01" lengthAdjust="spacingAndGlyphs" fill="#111">$50 million</text><text x="531.92" y="452.20" font-size="16.86" textLength="127.62" lengthAdjust="spacingAndGlyphs" fill="#111">Variable-rate and</text><text x="531.48" y="474.40" font-size="16.86" textLength="124.42" lengthAdjust="spacingAndGlyphs" fill="#111">short-term loans</text><text x="925.92" y="452.90" font-size="16.86" textLength="127.22" lengthAdjust="spacingAndGlyphs" fill="#111">Variable-rate CDs</text><text x="531.23" y="505.30" font-size="16.86" textLength="157.36" lengthAdjust="spacingAndGlyphs" fill="#111">Short-term securities</text><text x="942.72" y="505.50" font-size="16.86" textLength="169.11" lengthAdjust="spacingAndGlyphs" fill="#111">Money market deposit</text><text x="994.33" y="527.80" font-size="16.86" textLength="67.01" lengthAdjust="spacingAndGlyphs" fill="#111">accounts</text><text x="514.40" y="556.80" font-size="16.86" textLength="124.16" lengthAdjust="spacingAndGlyphs" fill="#111">Fixed-rate assets</text><text x="720.83" y="556.80" font-size="16.86" textLength="83.01" lengthAdjust="spacingAndGlyphs" fill="#111">$80 million</text><text x="908.25" y="557.20" font-size="16.86" textLength="167.93" lengthAdjust="spacingAndGlyphs" fill="#111">Fixed-rate liabilities 40</text><text x="1146.73" y="557.20" font-size="16.86" textLength="82.81" lengthAdjust="spacingAndGlyphs" fill="#111">$50 million</text><text x="530.73" y="590.00" font-size="16.86" textLength="66.80" lengthAdjust="spacingAndGlyphs" fill="#111">Reserves</text><text x="925.18" y="590.30" font-size="16.86" textLength="142.65" lengthAdjust="spacingAndGlyphs" fill="#111">Checkable deposits</text><text x="530.65" y="623.00" font-size="16.86" textLength="121.96" lengthAdjust="spacingAndGlyphs" fill="#111">Long-term loans</text><text x="925.28" y="623.10" font-size="16.86" textLength="121.29" lengthAdjust="spacingAndGlyphs" fill="#111">Savings deposits</text><text x="530.65" y="656.50" font-size="16.86" textLength="153.34" lengthAdjust="spacingAndGlyphs" fill="#111">Long-term securities</text><text x="924.70" y="656.60" font-size="16.86" textLength="110.37" lengthAdjust="spacingAndGlyphs" fill="#111">Long-term CDs</text><text x="924.63" y="690.20" font-size="16.86" textLength="189.81" lengthAdjust="spacingAndGlyphs" fill="#111">Equity capital (10 million)</text></g>
<rect x="70.28" y="529.46" width="109.04" height="0.8" fill="#777"/>
<rect x="70.28" y="534.23" width="109.04" height="0.8" fill="#777"/>
<rect x="70.28" y="539.01" width="109.04" height="0.8" fill="#777"/>
<rect x="70.28" y="543.78" width="109.04" height="0.8" fill="#777"/>
<rect x="70.28" y="551.12" width="109.04" height="0.8" fill="#777"/>
<rect x="70.28" y="558.67" width="109.04" height="0.8" fill="#777"/>
<rect x="70.28" y="563.38" width="109.04" height="0.8" fill="#777"/>
<rect x="70.28" y="568.15" width="109.04" height="0.8" fill="#777"/>
<rect x="70.28" y="572.92" width="109.04" height="0.8" fill="#777"/>
<rect x="70.28" y="577.67" width="109.04" height="0.8" fill="#777"/>
<rect x="70.28" y="582.40" width="109.04" height="0.8" fill="#777"/>
<rect x="69.88" y="529.86" width="0.8" height="52.94" fill="#777"/>
<rect x="99.19" y="529.86" width="0.8" height="52.94" fill="#777"/>
<rect x="125.97" y="529.86" width="0.8" height="52.94" fill="#777"/>
<rect x="159.87" y="529.86" width="0.8" height="52.94" fill="#777"/>
<rect x="178.13" y="529.86" width="0.8" height="52.94" fill="#777"/>
<rect x="11" y="837" width="47.5" height="39" fill="#1b3a48"/>
<path d="M27 849.8 l6.8 -1 v7.3 h-6.8z M34.8 848.6 l8.2 -1.2 v8.7 h-8.2z M27 857.1 h6.8 v7.3 l-6.8 -1z M34.8 857.1 h8.2 v8.7 l-8.2 -1.2z" fill="#fff"/>
<rect x="58.5" y="837" width="343.5" height="38.5" fill="#f0f0f0"/>
<g fill="none" stroke="#333" stroke-width="1.5"><circle cx="81.5" cy="853.5" r="5.3"/><path d="M77.5 857.5 L71 864"/></g>
<text x="98.60" y="861.80" font-size="15.71" textLength="131.42" lengthAdjust="spacingAndGlyphs" fill="#4a4a4a">Type here to search</text>
<g fill="none" stroke="#e8e8e8" stroke-width="1.3"><rect x="419.5" y="851.5" width="10" height="9"/><path d="M418 849 h13 M418 863 h13"/><path d="M435 849 v3 M435 856 v7"/></g><circle cx="435" cy="854.2" r="1.2" fill="#e8e8e8"/>
<path d="M466 849 h7 l2 2 h13 v13 h-22z" fill="#e9b43a"/><rect x="466" y="852" width="22" height="12" fill="#f6d365"/><rect x="471" y="856" width="12" height="8" fill="#3a8fd9"/><rect x="473.5" y="858.5" width="7" height="4" fill="#f6d365"/>
<rect x="457" y="874" width="41" height="2" fill="#8db6dd"/>
<defs><linearGradient id="edg" x1="0" y1="0.2" x2="1" y2="0.5"><stop offset="0" stop-color="#1f8fe6"/><stop offset="0.45" stop-color="#2bc3e6"/><stop offset="0.75" stop-color="#4fd86e"/><stop offset="1" stop-color="#8ae87a"/></linearGradient><linearGradient id="edg2" x1="0" y1="0" x2="0" y2="1"><stop offset="0" stop-color="#2f9fe8" stop-opacity="0"/><stop offset="1" stop-color="#0b5fb8"/></linearGradient></defs>
<circle cx="526.5" cy="856" r="12" fill="url(#edg)"/><circle cx="526.5" cy="856" r="12" fill="url(#edg2)" opacity="0.7"/>
<path d="M526.5 856 L538.5 858.5 A12 12 0 0 1 528 868 z" fill="#154d86"/><circle cx="526.3" cy="857" r="4.3" fill="#133a5e"/><path d="M530.5 858 Q533 862 538 861.5" fill="none" stroke="#133a5e" stroke-width="2.5"/>
<rect x="506.7" y="874" width="41" height="2" fill="#8db6dd"/>
<rect x="552.3" y="837" width="48.7" height="39" fill="#9c6234"/><rect x="552.3" y="873.5" width="48.7" height="2.5" fill="#f47c20"/>
<rect x="574" y="849" width="13.5" height="14" fill="#fff"/><path d="M575 851 l5.8 5 5.8 -5" fill="none" stroke="#0a64c2" stroke-width="1.2"/><rect x="565.5" y="846.5" width="12" height="17.5" fill="#0a64c2"/>
<text x="567.04" y="859.50" font-size="11.43" textLength="8.95" lengthAdjust="spacingAndGlyphs" fill="#fff" font-weight="bold">O</text>
<circle cx="625" cy="855.5" r="11.5" fill="#2fa84f"/><path d="M625 855.5 L615 849.7 A11.5 11.5 0 0 1 635 849.7z" fill="#e0412e"/><path d="M625 855.5 L635 849.7 A11.5 11.5 0 0 1 625 867z" fill="#f7c21b"/><circle cx="625" cy="855.5" r="5" fill="#fff"/><circle cx="625" cy="855.5" r="3.8" fill="#3779e6"/>
<circle cx="632" cy="862.5" r="7.5" fill="#7b2fb0"/>
<text x="628.12" y="865.80" font-size="9.29" textLength="7.59" lengthAdjust="spacingAndGlyphs" fill="#fff" font-weight="bold">N</text>
<rect x="605.9" y="874" width="40" height="2" fill="#8db6dd"/>
<rect x="650.3" y="837" width="46" height="39" fill="#2c3f4d"/>
<rect x="672" y="848" width="13.5" height="15" fill="#fff"/><path d="M676 852 h7 M676 855.5 h7 M676 859 h7" stroke="#d24726" stroke-width="1.2"/><rect x="663.7" y="845.5" width="13" height="20" fill="#d24726"/>
<text x="665.62" y="860.00" font-size="12.86" textLength="9.01" lengthAdjust="spacingAndGlyphs" fill="#fff" font-weight="bold">P</text>
<rect x="650.3" y="874" width="46" height="2" fill="#8db6dd"/>
<rect x="722" y="848" width="13" height="15" fill="#fff"/><path d="M725 852 h8 M725 855.5 h8 M725 859 h8" stroke="#2b579a" stroke-width="1.2"/><rect x="712.2" y="846" width="14.5" height="20" fill="#2b579a"/>
<text x="713.00" y="860.00" font-size="12.14" textLength="11.99" lengthAdjust="spacingAndGlyphs" fill="#fff" font-weight="bold">W</text>
<rect x="704.7" y="874" width="41" height="2" fill="#8db6dd"/>
<rect x="763.3" y="845" width="21" height="21.5" fill="#c8140f"/><path d="M767 862 q4 -2 7 -9 q1 -4 -0.5 -4 q-1.5 0 -0.5 4 q2 5 7 6 q1 -1 -1 -1.5 q-5 0 -10 4z" fill="none" stroke="#fff" stroke-width="1.3"/>
<rect x="754" y="874" width="41" height="2" fill="#8db6dd"/>
<rect x="800" y="837" width="48.7" height="39" fill="#435563"/>
<circle cx="823.6" cy="855.8" r="11.5" fill="none" stroke="#6fa8d0" stroke-width="1.5"/><circle cx="823.6" cy="855.8" r="3.8" fill="#5db3f0"/>
<rect x="800" y="874" width="48.7" height="2" fill="#8db6dd"/>
<defs><radialGradient id="sun" cx="0.4" cy="0.35" r="0.7"><stop offset="0" stop-color="#f9b84a"/><stop offset="1" stop-color="#ee7d16"/></radialGradient></defs>
<circle cx="1150.8" cy="856.5" r="10.4" fill="url(#sun)"/>
<text x="1169.95" y="863.00" font-size="15.71" textLength="75.64" lengthAdjust="spacingAndGlyphs" fill="#f2f2f2">51°F  Sunny</text>
<path d="M1262.5 859.5 l6.5 -6.5 6.5 6.5" fill="none" stroke="#e6e6e6" stroke-width="1.3"/>
<path d="M1286 856 l8 -3 h6 v6 l-8 3 h-6z" fill="#e9e9e9"/><rect x="1294" y="856" width="7" height="7" fill="#d9222a"/>
<rect x="1313.5" y="848" width="7" height="11" rx="3" fill="#f0f0f0"/><path d="M1311.5 856 a5.5 5.5 0 0 0 11 0 M1317 861.5 v3 M1314 864.5 h6" fill="none" stroke="#f0f0f0" stroke-width="1.1"/>
<rect x="1336" y="852.5" width="12.5" height="7.5" fill="#f0f0f0"/><circle cx="1334.5" cy="851.5" r="1.8" fill="none" stroke="#f0f0f0"/>
<g fill="none" stroke="#f0f0f0" stroke-width="1.2"><path d="M1358.5 862 a13 13 0 0 1 13 -12"/><path d="M1362 862 a9.5 9.5 0 0 1 9.5 -8.5"/><path d="M1365.5 862 a6 6 0 0 1 6 -5"/></g><circle cx="1370.5" cy="861.5" r="1.4" fill="#f0f0f0"/>
<path d="M1381.5 854 h3 l4.5 -4 v13 l-4.5 -4 h-3z" fill="none" stroke="#f0f0f0" stroke-width="1.1"/><path d="M1391 853 a5 5 0 0 1 0 7 M1393.5 851 a8 8 0 0 1 0 11" fill="none" stroke="#f0f0f0" stroke-width="1.1"/>
<rect x="1406" y="855" width="7" height="8.5" fill="#e3232b"/><path d="M1411 851 h8 M1411 855 h8" stroke="#f0f0f0" stroke-width="2"/>
<text x="1436.06" y="851.70" font-size="11.57" textLength="44.15" lengthAdjust="spacingAndGlyphs" fill="#f2f2f2">8:02 AM</text>
<text x="1431.28" y="869.70" font-size="11.29" textLength="54.62" lengthAdjust="spacingAndGlyphs" fill="#f2f2f2">10/8/2022</text>
<path d="M1505 849.5 h14.5 v12 h-5 l-2.25 2.25 -2.25 -2.25 h-5z" fill="none" stroke="#f0f0f0" stroke-width="1.1"/>
<rect x="1540" y="837" width="1" height="39" fill="#4a5670"/><rect x="1541" y="837" width="4" height="39" fill="#1a1f2a"/>
<defs>
<linearGradient id="wbg" x1="0" y1="0" x2="1" y2="0.3">
<stop offset="0" stop-color="#b5bab6"/><stop offset="0.5" stop-color="#c0c2bd"/><stop offset="1" stop-color="#bcc3bd"/></linearGradient>
<radialGradient id="wsh" cx="0.5" cy="0.5" r="0.5"><stop offset="0" stop-color="#9aa39b" stop-opacity="0.9"/><stop offset="1" stop-color="#9aa39b" stop-opacity="0"/></radialGradient>
<radialGradient id="face" cx="0.47" cy="0.45" r="0.6"><stop offset="0" stop-color="#c9ab95"/><stop offset="0.6" stop-color="#b39580"/><stop offset="1" stop-color="#8a6e5d"/></radialGradient>
<filter id="blur1" x="-10%" y="-10%" width="120%" height="120%"><feGaussianBlur stdDeviation="1.1"/></filter>
<filter id="blur3" x="-30%" y="-30%" width="160%" height="160%"><feGaussianBlur stdDeviation="8"/></filter>
<clipPath id="wclip"><rect x="1224" y="655.5" width="321" height="181"/></clipPath>
</defs>
<g clip-path="url(#wclip)">
<rect x="1224" y="655.5" width="321" height="181" fill="url(#wbg)"/>
<g filter="url(#blur3)">
<rect x="1200" y="640" width="40" height="220" fill="#b0b6b2"/>
<ellipse cx="1250" cy="662" rx="40" ry="14" fill="#a9aea7" opacity="0.8"/>
<ellipse cx="1490" cy="658" rx="70" ry="16" fill="#a2aca2" opacity="0.7"/>
<rect x="1512" y="650" width="40" height="200" fill="#abb7ae" opacity="0.8"/>
<ellipse cx="1470" cy="800" rx="45" ry="50" fill="#a6aca5" opacity="0.8"/>
</g>
<g filter="url(#blur1)">
<path d="M1265.4 841.1 L1277.8 824.6 Q1302.6 812.2 1339.8 806.0 Q1372.9 820.5 1401.9 809.1 Q1430.8 814.3 1443.2 826.7 L1451.5 841.1z" fill="#3a4f53"/>
<path d="M1342.9 787.4 L1401.9 787.4 L1400.8 809.1 Q1372.9 820.5 1344.0 807.0z" fill="#8d705f"/>
<path d="M1339.8 733.6 Q1340.9 706.7 1377.1 706.7 Q1415.3 707.7 1415.3 741.9 L1413.2 779.1 Q1403.9 818.4 1372.9 819.4 Q1348.1 816.3 1341.9 779.1z" fill="url(#face)"/>
<path d="M1344.0 779.1 Q1348.1 799.8 1360.5 812.2 Q1372.9 820.5 1387.4 813.2 Q1403.9 799.8 1410.1 779.1 Q1401.9 797.7 1389.5 797.7 Q1377.1 789.4 1364.6 797.7 Q1352.2 797.7 1344.0 779.1z" fill="#4e3f37" opacity="0.85"/>
<path d="M1356.4 789.4 Q1358.4 782.2 1376.0 781.6 Q1393.6 782.2 1396.7 789.4 Q1376.0 785.7 1356.4 789.4z" fill="#54443a" opacity="0.8"/>
<path d="M1348.1 746.0 Q1358.4 740.8 1368.8 746.0 M1383.3 746.0 Q1393.6 741.9 1403.9 747.0" fill="none" stroke="#4e3e36" stroke-width="3"/>
<path d="M1350.2 754.3 Q1358.4 751.2 1366.7 754.7 Q1358.4 756.8 1350.2 754.3z M1384.3 754.7 Q1392.6 751.8 1400.8 755.9 Q1392.6 757.6 1384.3 754.7z" fill="#3f312c"/>
<path d="M1369.8 776.0 Q1377.1 780.1 1385.3 776.0" fill="none" stroke="#8a6c5c" stroke-width="2.5"/>
<path d="M1338.8 723.3 Q1336.7 696.4 1352.2 688.1 Q1368.8 675.7 1385.3 681.9 Q1401.9 690.2 1410.1 708.8 Q1416.3 723.3 1415.3 746.0 Q1411.2 721.2 1397.7 715.0 Q1368.8 708.8 1348.1 717.0 Q1341.9 725.3 1340.9 741.9z" fill="#3b302b"/>
<circle cx="1348.1" cy="696.4" r="6.6" fill="#3b302b"/>
<circle cx="1358.4" cy="688.1" r="7.2" fill="#3b302b"/>
<circle cx="1372.9" cy="684.0" r="7.9" fill="#3b302b"/>
<circle cx="1387.4" cy="686.0" r="7.0" fill="#3b302b"/>
<circle cx="1397.7" cy="694.3" r="6.2" fill="#3b302b"/>
<circle cx="1406.0" cy="704.6" r="5.4" fill="#3b302b"/>
<circle cx="1346.0" cy="708.8" r="4.6" fill="#3b302b"/>
<path d="M1325.3 756.3 Q1331.5 729.5 1346.0 721.2" fill="none" stroke="#5e6262" stroke-width="4.5"/>
<path d="M1406.0 710.8 Q1422.6 723.3 1427.7 756.3" fill="none" stroke="#5e6262" stroke-width="4.5"/>
<ellipse cx="1330.5" cy="766.7" rx="11" ry="16" fill="#2b2d2e"/>
<ellipse cx="1422.6" cy="767.7" rx="11" ry="15.5" fill="#2b2d2e"/>
<path d="M1321.2 770.8 Q1317.1 783.2 1332.6 799.8" fill="none" stroke="#3a3c3d" stroke-width="3.5"/>
<path d="M1323.3 783.2 Q1321.2 812.2 1315.0 837.0" fill="none" stroke="#3a3c3d" stroke-width="1.5"/>
</g></g>
</svg>
</div>
</body></html>
